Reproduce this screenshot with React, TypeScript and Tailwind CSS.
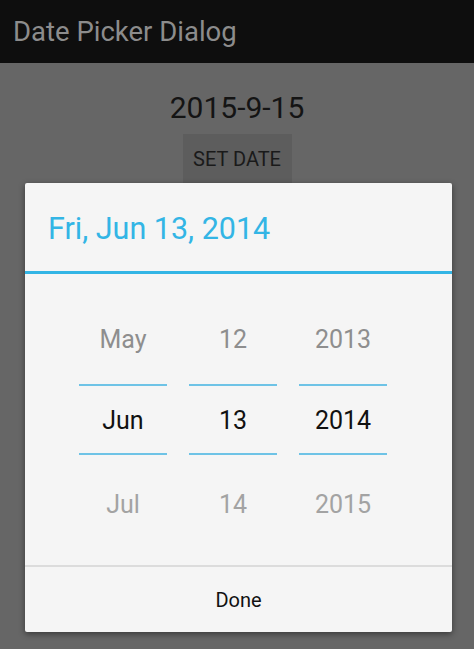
const FONT = { fontFamily: "Roboto, 'Noto Sans', 'Liberation Sans', sans-serif" };

type Col = { prev: string; cur: string; next: string };

const COLS: Col[] = [
  { prev: "May", cur: "Jun", next: "Jul" },
  { prev: "12", cur: "13", next: "14" },
  { prev: "2013", cur: "2014", next: "2015" },
];

function Spinner({ col }: { col: Col }) {
  return (
    <div className="flex w-[88px] flex-col items-center">
      <div className="flex h-[110px] items-end pb-[29px] text-[25px] leading-[30px] text-[#8e8e8e]">
        {col.prev}
      </div>
      <div className="h-[2px] w-full bg-[#6ec3e6]" />
      <div className="flex h-[67px] items-center pt-[2px] text-[25px] leading-[30px] text-[#111111]">
        {col.cur}
      </div>
      <div className="h-[2px] w-full bg-[#6ec3e6]" />
      <div className="flex h-[110px] items-start pt-[35px] text-[25px] leading-[30px] text-[#a3a3a3]">
        {col.next}
      </div>
    </div>
  );
}

export default function App() {
  return (
    <div className="relative h-[649px] w-[474px] overflow-hidden bg-[#666666]" style={FONT}>
      {/* action bar */}
      <div className="flex h-[63px] items-center bg-[#0e0e0e] pl-[13px]">
        <span className="text-[27.5px] leading-none text-[#8c8c8c]">Date Picker Dialog</span>
      </div>

      {/* page content */}
      <div className="flex flex-col items-center">
        <div className="mt-[27px] text-[30px] leading-[36px] text-[#141414]">2015-9-15</div>
        <div className="mt-[8px] flex h-[49px] w-[109px] items-center justify-center bg-[#5d5d5d] text-[20px] text-[#1a1a1a]">
          SET DATE
        </div>
      </div>

      {/* dialog */}
      <div className="absolute left-[25px] top-[183px] flex w-[427px] flex-col rounded-[2px] bg-[#f5f5f5] shadow-[0_2px_6px_rgba(0,0,0,0.45)]">
        <div className="flex h-[88px] items-center pl-[23px] pt-[4px]">
          <span className="text-[30.5px] leading-none text-[#33b5e5]">Fri, Jun 13, 2014</span>
        </div>
        <div className="h-[3px] bg-[#33b5e5]" />
        <div className="flex gap-[22px] pl-[54px]">
          {COLS.map((c, i) => (
            <Spinner key={i} col={c} />
          ))}
        </div>
        <div className="h-[2px] bg-[#dcdcdc]" />
        <div className="flex h-[65px] items-center justify-center text-[20px] text-[#111111]">Done</div>
      </div>
    </div>
  );
}
